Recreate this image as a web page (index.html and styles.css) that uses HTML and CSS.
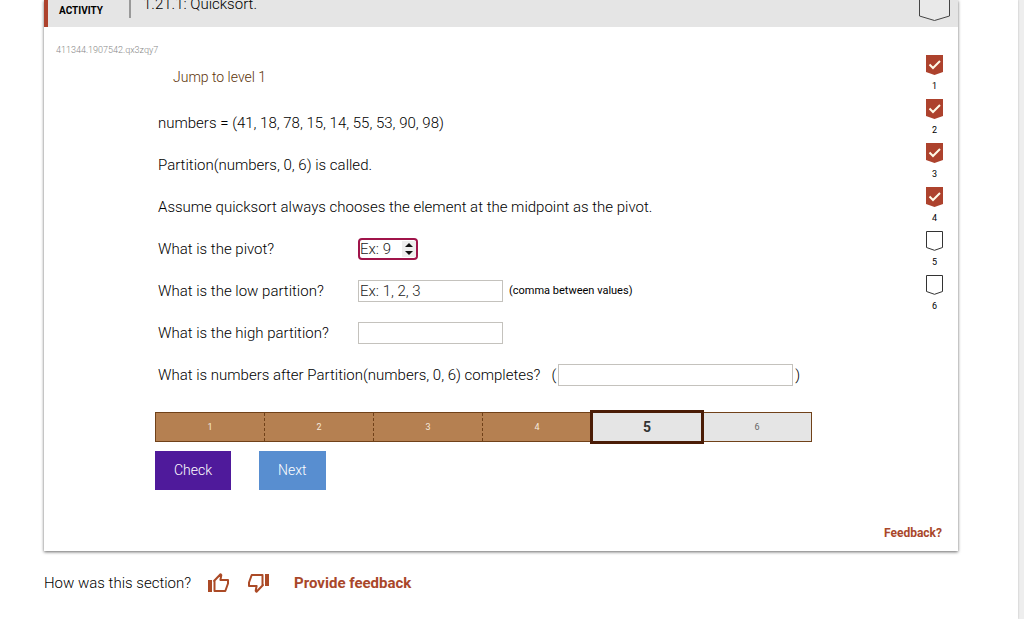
FILE: index.html
```html
<!DOCTYPE html>
<html lang="en">
<head>
<meta charset="utf-8">
<meta name="viewport" content="width=device-width, initial-scale=1">
<title>1.21.1: Quicksort.</title>
<link rel="stylesheet" href="styles.css">
</head>
<body>
<svg class="defs" aria-hidden="true">
  <symbol id="badge-done" viewBox="0 0 17 20">
    <path d="M0 0H17V17L8.500 20L0 17Z" fill="#ad422d"/>
    <path d="M3.500 9.500L7 13L14 6" fill="none" stroke="#fffbe8" stroke-width="2"/>
  </symbol>
  <symbol id="badge-open" viewBox="0 0 17 20">
    <path d="M.5 .5H16.500V16.500L8.500 19.300L.5 16.500Z" fill="#fff" stroke="#333"/>
  </symbol>
</svg>
<main class="page">
  <section class="card">
    <header class="card-header">
      <span class="kind">ACTIVITY</span>
      <h1 class="title">1.21.1: Quicksort.</h1>
      <svg class="header-badge" viewBox="0 0 32 36" aria-hidden="true"><path d="M1.500 1H31.500V31L16.500 35.500L1.500 31Z" fill="#e9e9e9" stroke="#444"/></svg>
    </header>
    <div class="card-body">
      <p class="code">411344.1907542.qx3zqy7</p>
      <div class="columns">
        <form class="exercise">
          <button type="button" class="jump">Jump to level 1</button>
          <div class="question">
            <p>numbers = (41, 18, 78, 15, 14, 55, 53, 90, 98)</p>
            <p>Partition(numbers, 0, 6) is called.</p>
            <p>Assume quicksort always chooses the element at the midpoint as the pivot.</p>
            <div class="row">
              <label class="prompt" for="pivot">What is the pivot?</label>
              <span class="number">
                <input class="field field-number" id="pivot" type="number" placeholder="Ex: 9">
                <svg class="spinner" viewBox="0 0 14 16" aria-hidden="true"><path d="M0 0H14V16H0Z" fill="#eee"/><path d="M3 6L7 2L11 6ZM3 10L7 14L11 10Z" fill="#111"/></svg>
              </span>
            </div>
            <div class="row">
              <label class="prompt" for="low">What is the low partition?</label>
              <input class="field field-list" id="low" type="text" placeholder="Ex: 1, 2, 3">
              <span class="hint">(comma between values)</span>
            </div>
            <div class="row">
              <label class="prompt" for="high">What is the high partition?</label>
              <input class="field field-list" id="high" type="text">
            </div>
            <div class="row">
              <label class="prompt-long" for="after">What is numbers after Partition(numbers, 0, 6) completes?</label>
              <span class="parens">(<input class="field field-long" id="after" type="text">)</span>
            </div>
          </div>
          <ol class="levels">
            <li class="level done">1</li>
            <li class="level done">2</li>
            <li class="level done">3</li>
            <li class="level done">4</li>
            <li class="level current" aria-current="step">5</li>
            <li class="level">6</li>
          </ol>
          <div class="actions">
            <button type="button" class="button check">Check</button>
            <button type="button" class="button next">Next</button>
          </div>
        </form>
        <ol class="badges">
          <li><svg class="badge"><use href="#badge-done"/></svg>1</li>
          <li><svg class="badge"><use href="#badge-done"/></svg>2</li>
          <li><svg class="badge"><use href="#badge-done"/></svg>3</li>
          <li><svg class="badge"><use href="#badge-done"/></svg>4</li>
          <li><svg class="badge"><use href="#badge-open"/></svg>5</li>
          <li><svg class="badge"><use href="#badge-open"/></svg>6</li>
        </ol>
      </div>
      <footer class="card-footer"><a class="link small" href="#feedback">Feedback?</a></footer>
    </div>
  </section>
  <div class="rating">
    <span>How was this section?</span>
    <button type="button" class="thumb" aria-label="Thumbs up">
      <svg viewBox="0 0 22 20"><path d="M0 7H4V19H0Z" fill="#ab4a26"/><path d="M6 8L12.500 1.200L13.300 2.200L12.400 7H20V10.500L17.300 18H6.500V8Z" fill="none" stroke="#ab4a26" stroke-width="2" stroke-linejoin="round"/></svg>
    </button>
    <button type="button" class="thumb" aria-label="Thumbs down">
      <svg viewBox="0 0 22 20"><path d="M18 1H22V13H18Z" fill="#ab4a26"/><path d="M16 12L9.500 18.800L8.700 17.800L9.600 13H2V9.500L4.700 2H15.500V12Z" fill="none" stroke="#ab4a26" stroke-width="2" stroke-linejoin="round"/></svg>
    </button>
    <a class="link provide" href="#provide">Provide feedback</a>
  </div>
</main>
</body>
</html>
```
FILE: styles.css
```css
* { box-sizing: border-box; }
body {
  margin: 0;
  background: #eee;
  font: 300 15px/22px Roboto, sans-serif;
  color: #000;
}
p, h1, ol { margin: 0; padding: 0; }
ol { list-style: none; }
button, input { font: inherit; }
button { border: 0; padding: 0; cursor: pointer; }
.defs { position: absolute; width: 0; height: 0; }

.page {
  min-height: 100vh;
  margin-right: 6px;
  padding: 0 60px 0 44px;
  background: #fff;
  box-shadow: 0 0 2px #bbb;
}
.card { background: #fff; box-shadow: 0 1px 3px rgba(0, 0, 0, .6); }
.card-header {
  display: flex;
  align-items: flex-end;
  height: 27px;
  overflow: hidden;
  padding: 0 8px 0 11px;
  border-left: 4px solid #ad422d;
  background: #e5e5e5;
}
.kind {
  width: 72px;
  height: 36px;
  margin-bottom: 9px;
  padding-top: 18px;
  border-right: 2px solid #999;
  font-size: 10px;
  font-weight: 700;
  line-height: 22px;
}
.title {
  flex: 1;
  padding: 0 0 12px 12px;
  font-size: 15px;
  font-weight: 300;
}
.header-badge { width: 32px; height: 36px; margin-bottom: 6px; }

.card-body { padding: 13px 15px 8px 12px; }
.code { color: #888; font-size: 9px; line-height: 20px; }
.columns { display: flex; justify-content: space-between; padding-left: 99px; }
.exercise { flex: 0 1 657px; padding-top: 6px; }
.jump { margin-left: 18px; background: none; color: #5c3309; font-weight: 300; font-size: 14px; line-height: 22px; }
.question { display: grid; gap: 20px; padding: 24px 0 0 3px; }
.row { display: flex; align-items: center; height: 22px; white-space: nowrap; }
.prompt { width: 200px; }
.field {
  height: 22px;
  padding: 0 1px;
  border: 1px solid #c4c2bd;
  background: #fff;
  color: #222;
}
.field::placeholder { color: #222; opacity: 1; }
.field-list { width: 145px; }
.field-long { width: 235px; margin: 0 2px; }
.number { position: relative; width: 60px; height: 22px; display: flex; }
.field-number {
  width: 100%;
  padding: 0;
  border: 2px solid #a0144a;
  border-radius: 4px;
  appearance: textfield;
}
.field-number::-webkit-inner-spin-button { appearance: none; }
.spinner { position: absolute; right: 2px; top: 3px; width: 14px; height: 16px; }
.hint { margin-left: 6px; font-size: 11px; font-weight: 400; }
.parens { display: flex; align-items: center; margin-left: 11px; }

.levels { display: flex; margin-top: 26px; border: 1px solid #704119; }
.level {
  flex: 1;
  height: 28px;
  border-right: 1px dashed #704119;
  background: #e5e5e5;
  color: #666;
  font-size: 9px;
  font-weight: 400;
  line-height: 28px;
  text-align: center;
}
.level.done { background: #b58051; color: #f6e9dc; }
.level:last-child, .level.done:nth-child(4) { border-right: 0; }
.level.current {
  flex: 0 0 114px;
  height: 34px;
  margin: -3px -1px;
  border: 3px solid #4b1d07;
  color: #333;
  font-size: 14px;
  font-weight: 700;
  z-index: 1;
}
.actions { display: flex; gap: 28px; margin-top: 9px; }
.button { padding: 0 19px; color: #fff; font-size: 14px; font-weight: 300; line-height: 39px; }
.check { background: #4f1a9b; }
.next { background: #588ed0; }

.badges { width: 17px; margin-top: -5px; }
.badges li { height: 44px; font-size: 9px; font-weight: 400; line-height: 22px; text-align: center; }
.badge { display: block; width: 17px; height: 20px; }
.card-footer { padding: 31px 1px 0 0; text-align: right; }
.link { color: #a9472a; font-weight: 700; text-decoration: none; }
.small { font-size: 12px; line-height: 20px; }
.rating { display: flex; align-items: center; padding-top: 21px; }
.thumb { width: 22px; height: 20px; margin-left: 17px; background: none; }
.thumb svg { display: block; width: 22px; height: 20px; }
.provide { margin-left: 25px; }
```
